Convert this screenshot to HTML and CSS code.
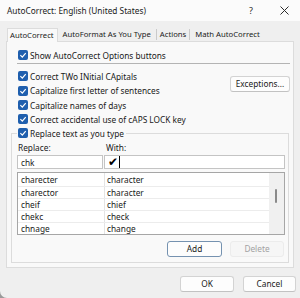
FILE: index.html
```html
<!DOCTYPE html>
<html>
<head>
<meta charset="utf-8">
<title>AutoCorrect</title>
<link rel="stylesheet" href="styles.css">
</head>
<body>
<div class="window">
  <div class="titlebar">
    <span class="title">AutoCorrect: English (United States)</span>
    <span class="help">?</span>
    <svg class="close" width="9" height="9" viewBox="0 0 9 9"><path d="M0.5 0.5L8.5 8.5M8.5 0.5L0.5 8.5" stroke="#2b2b2b" stroke-width="1" fill="none"/></svg>
  </div>
  <div class="tabs">
    <div class="tab active">AutoCorrect</div>
    <div class="tab t2">AutoFormat As You Type</div>
    <div class="sep"></div>
    <div class="tab t3">Actions</div>
    <div class="sep"></div>
    <div class="tab t4">Math AutoCorrect</div>
  </div>
  <div class="panel">
    <div class="row"><span class="cb"><svg width="10" height="10" viewBox="0 0 10 10"><path d="M2.4 5.2L4.3 7.1L7.7 3.1" stroke="#fff" stroke-width="1.2" fill="none"/></svg></span>Show AutoCorrect Options buttons</div>
    <div class="rule"></div>
    <div class="opts">
      <div class="optlist">
        <div class="row"><span class="cb"><svg width="10" height="10" viewBox="0 0 10 10"><path d="M2.4 5.2L4.3 7.1L7.7 3.1" stroke="#fff" stroke-width="1.2" fill="none"/></svg></span>Correct TWo INitial CApitals</div>
        <div class="row r15"><span class="cb"><svg width="10" height="10" viewBox="0 0 10 10"><path d="M2.4 5.2L4.3 7.1L7.7 3.1" stroke="#fff" stroke-width="1.2" fill="none"/></svg></span>Capitalize first letter of sentences</div>
        <div class="row"><span class="cb"><svg width="10" height="10" viewBox="0 0 10 10"><path d="M2.4 5.2L4.3 7.1L7.7 3.1" stroke="#fff" stroke-width="1.2" fill="none"/></svg></span>Capitalize names of days</div>
        <div class="row"><span class="cb"><svg width="10" height="10" viewBox="0 0 10 10"><path d="M2.4 5.2L4.3 7.1L7.7 3.1" stroke="#fff" stroke-width="1.2" fill="none"/></svg></span>Correct accidental use of cAPS LOCK key</div>
      </div>
      <button class="btn exc">Exceptions...</button>
    </div>
    <fieldset class="group">
      <legend class="legend"><span class="cb"><svg width="10" height="10" viewBox="0 0 10 10"><path d="M2.4 5.2L4.3 7.1L7.7 3.1" stroke="#fff" stroke-width="1.2" fill="none"/></svg></span>Replace text as you type</legend>
      <div class="labels"><span class="lab1">Replace:</span><span class="lab2">With:</span></div>
      <div class="inputs">
        <div class="in in1">chk</div>
        <div class="in in2"><span class="chk">✔</span><span class="caret"></span></div>
      </div>
      <div class="list">
        <div class="rows">
          <div class="lr"><span class="c1">charecter</span><span class="c2">character</span></div>
          <div class="lr"><span class="c1">charector</span><span class="c2">character</span></div>
          <div class="lr"><span class="c1">cheif</span><span class="c2">chief</span></div>
          <div class="lr"><span class="c1">chekc</span><span class="c2">check</span></div>
          <div class="lr"><span class="c1">chnage</span><span class="c2">change</span></div>
        </div>
        <div class="sb"><div class="thumb"></div></div>
      </div>
      <div class="gbtns">
        <button class="btn add">Add</button>
        <button class="btn del">Delete</button>
      </div>
    </fieldset>
  </div>
  <div class="footer">
    <button class="btn ok">OK</button>
    <button class="btn cancel">Cancel</button>
  </div>
</div>
</body>
</html>
```

FILE: styles.css
```css
* { box-sizing: border-box; }
html, body { margin: 0; padding: 0; }
body {
  width: 300px;
  height: 298px;
  overflow: hidden;
  background: #9a9a9a;
  font-family: "Noto Sans", "Open Sans", sans-serif;
  font-size: 8.3px;
  color: #1a1a1a;
}
.window {
  width: 300px;
  height: 298px;
  background: #efefef;
  border-bottom-left-radius: 7px;
}
.titlebar {
  height: 21px;
  background: #fbfbfb;
  display: flex;
  align-items: center;
  padding: 0 11px 0 7px;
}
.title { flex: 1; font-size: 8.3px; white-space: nowrap; }
.help { font-size: 9px; color: #2b2b2b; margin-right: 27px; }
.close { display: block; }

.tabs {
  height: 20px;
  padding: 7px 0 0 7px;
  display: flex;
  align-items: flex-start;
  font-size: 7.7px;
}
.tab {
  height: 13px;
  line-height: 13px;
  padding: 0 5px;
  white-space: nowrap;
}
.tab.active {
  position: relative;
  z-index: 1;
  height: 14px;
  margin-bottom: -1px;
  line-height: 12px;
  padding: 0 3px 0 2px;
  background: #f9f9f9;
  border: 1px solid #dcdcdc;
  border-bottom: none;
}
.tab.t3 { padding: 0 3px; }
.tab.t4 { padding: 0 5px; }
.sep {
  width: 1px;
  height: 11px;
  margin-top: 1px;
  background: #cacaca;
}

.panel {
  margin-left: 6px;
  width: 288px;
  height: 227px;
  background: #f9f9f9;
  border: 1px solid #dcdcdc;
  padding-top: 6px;
}
.row {
  display: flex;
  align-items: center;
  height: 14px;
  padding-left: 11px;
  white-space: nowrap;
}
.row.r15 { height: 15px; }
.cb {
  flex: none;
  display: block;
  width: 10px;
  height: 10px;
  border-radius: 2px;
  background: #1f5fae;
  margin-right: 2px;
}
.cb svg { display: block; }
.rule {
  height: 1px;
  background: #b4b4b4;
  margin: 1px 3px 5px 10px;
}
.opts { display: flex; align-items: flex-start; }
.optlist { flex: 1; }

.btn {
  font-family: inherit;
  font-size: 8.3px;
  color: #1a1a1a;
  background: #fdfdfd;
  border: 1px solid #d3d3d3;
  border-bottom-color: #c2c2c2;
  border-radius: 3px;
  padding: 0;
  height: 16px;
  line-height: 14px;
}
.exc { width: 60px; margin: 7px 3px 0 0; }

.group {
  margin: 0 4px;
  padding: 0 3px 5px 5px;
  border: 1px solid #dcdcdc;
  min-width: 0;
}
.legend {
  display: flex;
  align-items: center;
  height: 14px;
  padding: 0 2px 0 1px;
  white-space: nowrap;
}
.labels { display: flex; align-items: center; height: 14px; }
.lab1 { width: 87px; padding-left: 1px; }
.lab2 { padding-left: 2px; }
.inputs { display: flex; height: 14px; margin-top: 1px; }
.in {
  height: 14px;
  background: #fff;
  border: 1px solid #c4c4c4;
  display: flex;
  align-items: center;
  padding-left: 3px;
}
.in1 { width: 86px; }
.in2 { flex: 1; margin-left: 1px; }
.chk {
  font-family: "DejaVu Sans", sans-serif;
  font-size: 12px;
  line-height: 12px;
  color: #000;
}
.caret {
  width: 1px;
  height: 12px;
  background: #000;
  margin-left: 1px;
}

.list {
  display: flex;
  height: 63px;
  margin-top: 3px;
  background: #fff;
  border: 1px solid #a6a6a6;
}
.rows { flex: 1; }
.lr {
  display: flex;
  height: 12px;
  border-bottom: 1px solid #ececec;
}
.lr:first-child { height: 14px; }
.lr:last-child { height: 11px; border-bottom: none; }
.c1 {
  width: 87px;
  padding-left: 3px;
  border-right: 1px solid #e4e4e4;
  display: flex;
  align-items: center;
}
.c2 { padding-left: 2px; display: flex; align-items: center; }
.sb { width: 15px; background: #f0f0f0; }
.thumb {
  width: 2px;
  height: 14px;
  margin: 16px 0 0 6px;
  background: #8a8a8a;
  border-radius: 1px;
}

.gbtns {
  display: flex;
  justify-content: flex-end;
  gap: 8px;
  margin-top: 6px;
  padding-right: 1px;
}
.add { width: 55px; border-color: #7592b0; }
.del {
  width: 54px;
  color: #a2a2a2;
  background: #f6f6f6;
  border-color: #ececec;
}

.footer {
  display: flex;
  justify-content: flex-end;
  gap: 9px;
  padding: 8px 4px 0 0;
}
.ok { width: 54px; }
.cancel { width: 53px; }
```
